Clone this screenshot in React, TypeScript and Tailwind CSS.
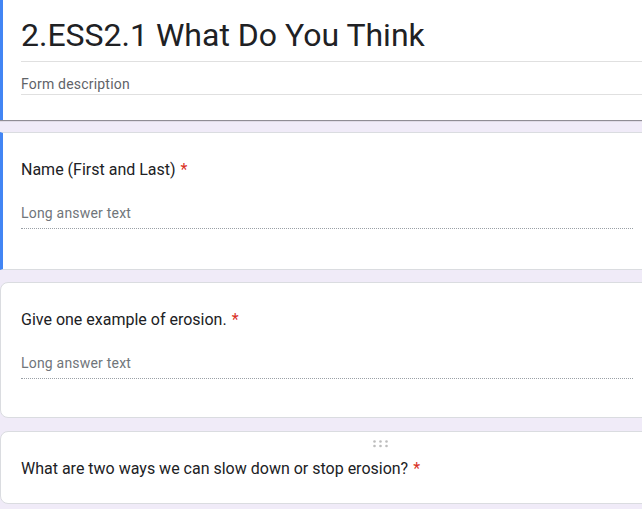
export default function App() {
  const questions = [
    { label: 'Name (First and Last)', focused: true, pb: 'pb-[40px]' },
    { label: 'Give one example of erosion.', focused: false, pb: 'pb-[38px]' },
  ];

  return (
    <div className="h-[509px] w-full overflow-hidden bg-[#f0ebf8] font-['Roboto','Liberation_Sans',sans-serif]">
      <div className="flex w-[763px] flex-col">
        {/* Title card */}
        <div className="h-[120px] border-l-[3px] border-[#4285f4] bg-white pl-[18px] pt-[15px] shadow-[0_1px_1px_rgba(0,0,0,0.4)]">
          <div className="border-b border-[#e0e0e0] pb-[6px] text-[32px] leading-[40px] text-[#202124]">
            2.ESS2.1 What Do You Think
          </div>
          <div className="mt-[12px] border-b border-[#e0e0e0] text-[14px] leading-[20px] tracking-[0.2px] text-[#5f6368]">
            Form description
          </div>
        </div>

        {/* Question cards */}
        {questions.map((q, i) => (
          <div
            key={i}
            className={
              q.focused
                ? `mt-[12px] border-y border-[#dadce0] border-l-[3px] border-l-[#4285f4] bg-white pl-[18px] pt-[25px] ${q.pb}`
                : `mt-[12px] rounded-lg border border-[#dadce0] bg-white pl-[20px] pt-[25px] ${q.pb}`
            }
          >
            <div className="text-[16px] leading-[24px] text-[#202124]">
              {q.label}
              <span className="ml-[5px] text-[#d93025]">*</span>
            </div>
            <div className="mt-[21px] w-[612px] border-b border-dotted border-[#9aa0a6] pb-[5px] text-[14px] leading-[20px] tracking-[0.2px] text-[#70757a]">
              Long answer text
            </div>
          </div>
        ))}

        <div className="mt-[13px] h-[73px] rounded-lg border border-[#dadce0] bg-white pl-[20px]">
          <div className="flex h-[25px] justify-center pt-[8px]">
            <svg width="16" height="8" viewBox="0 0 16 8" className="ml-[-22px]">
              {[1.5, 7.5, 13.5].map((x) =>
                [1.5, 6].map((y) => <circle key={`${x}-${y}`} cx={x} cy={y} r="1.3" fill="#bdbdbd" />)
              )}
            </svg>
          </div>
          <div className="text-[16px] leading-[24px] text-[#202124]">
            What are two ways we can slow down or stop erosion?
            <span className="ml-[5px] text-[#d93025]">*</span>
          </div>
        </div>
      </div>
    </div>
  );
}
